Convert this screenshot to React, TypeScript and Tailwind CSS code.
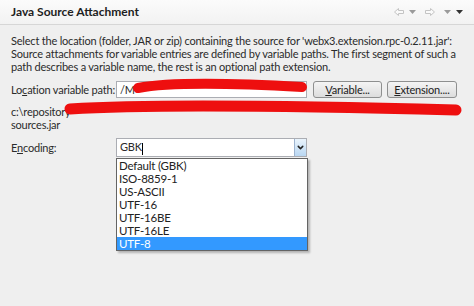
import { ChevronDown } from 'lucide-react';

const encodings = ['Default (GBK)', 'ISO-8859-1', 'US-ASCII', 'UTF-16', 'UTF-16BE', 'UTF-16LE', 'UTF-8'];

function Arrow({ dir }: { dir: 'left' | 'right' }) {
  return (
    <svg width="10" height="8" viewBox="0 0 10 8" className={dir === 'right' ? '-scale-x-100' : ''}>
      <path d="M0.5 4 L4.5 0.5 V2.5 H9.5 V5.5 H4.5 V7.5 Z" fill="#fafafa" stroke="#c4c4c4" strokeWidth="1" strokeLinejoin="round" />
    </svg>
  );
}

function Caret({ dark }: { dark?: boolean }) {
  return (
    <svg width="7" height="4" viewBox="0 0 7 4">
      <path d="M0 0 H7 L3.5 4 Z" fill={dark ? '#333' : '#9a9a9a'} />
    </svg>
  );
}

function Button({ hot, rest, w }: { hot: string; rest: string; w: string }) {
  return (
    <button className={`${w} h-[17px] rounded-[3px] border border-[#8e8f8f] bg-gradient-to-b from-[#f4f4f4] to-[#dddddd] leading-[15px] text-[#222] whitespace-nowrap`}>
      <span className="underline">{hot}</span>
      {rest}
    </button>
  );
}

export default function App() {
  return (
    <div className="w-[474px] h-[306px] bg-[#efefef] flex flex-col font-['Lato',sans-serif] text-[11px] tracking-[-0.2px] text-[#2b2b2b] overflow-hidden">
      {/* Title bar */}
      <div className="h-[25px] flex items-center justify-between pl-[11px] pr-[11px] bg-gradient-to-b from-[#fbfbfb] to-[#f2f2f2] border-b border-[#d6d6d6]">
        <span className="text-[12px] font-bold tracking-normal text-[#1e1e1e]">Java Source Attachment</span>
        <div className="flex items-center">
          <Arrow dir="left" />
          <span className="ml-[5px] flex"><Caret /></span>
          <span className="ml-[9px] flex"><Arrow dir="right" /></span>
          <span className="ml-[9px] flex"><Caret /></span>
          <span className="ml-[5px] flex"><Caret dark /></span>
        </div>
      </div>

      {/* Body */}
      <div className="relative flex-1 px-[11px] pt-[9px] leading-[13px]">
        <p className="whitespace-nowrap">Select the location (folder, JAR or zip) containing the source for 'webx3.extension.rpc-0.2.11.jar':</p>
        <p className="whitespace-nowrap">Source attachments for variable entries are defined by variable paths. The first segment of such a</p>
        <p className="whitespace-nowrap">path describes a variable name, the rest is an optional path extension.</p>

        <div className="flex items-center mt-[8px] h-[17px]">
          <span className="w-[105px] whitespace-nowrap">
            Lo<span className="underline">c</span>ation variable path:
          </span>
          <div className="w-[191px] h-[17px] bg-white border border-[#abadb3] px-[3px] leading-[15px]">
            /M
          </div>
          <div className="ml-[6px] flex">
            <Button w="w-[69px]" hot="V" rest="ariable..." />
          </div>
          <div className="ml-[5px] flex">
            <Button w="w-[70px]" hot="E" rest="xtension...." />
          </div>
        </div>

        <p className="mt-[7px]">c:\repository</p>
        <p>sources.jar</p>

        <div className="flex items-center mt-[7px]">
          <span className="w-[105px]">
            E<span className="underline">n</span>coding:
          </span>
          <div className="relative w-[191px] h-[19px] bg-white border border-[#abadb3] flex items-center pl-[3px]">
            <span className="flex-1">GBK<span className="inline-block w-px h-[12px] bg-black align-middle" /></span>
            <div className="w-[12px] h-[17px] border-l border-[#9eb4d0] bg-gradient-to-b from-[#eaf4fc] to-[#b9d7f2] flex items-center justify-center">
              <ChevronDown className="w-[9px] h-[9px] text-[#222]" strokeWidth={4} />
            </div>

            {/* Open dropdown list */}
            <div className="absolute left-[-1px] top-[19px] w-[192px] bg-white border border-[#646464] shadow-[2px_2px_2px_rgba(0,0,0,0.25)] z-10 text-[11.5px]">
              {encodings.map((e) => (
                <div
                  key={e}
                  className={`h-[13px] leading-[13px] pl-[2px] ${e === 'UTF-8' ? 'bg-[#3399ff] text-white' : 'text-[#222]'}`}
                >
                  {e}
                </div>
              ))}
            </div>
          </div>
        </div>

        {/* Red redaction scribbles */}
        <svg className="absolute left-0 top-0 pointer-events-none" width="474" height="281" viewBox="0 0 474 281">
          <path d="M138 63 C170 57 230 58 302 62" stroke="#ee0f0f" strokeWidth="10" fill="none" strokeLinecap="round" />
          <path d="M70 84 C150 79 300 81 456 85" stroke="#ee0f0f" strokeWidth="11" fill="none" strokeLinecap="round" />
        </svg>
      </div>
    </div>
  );
}
